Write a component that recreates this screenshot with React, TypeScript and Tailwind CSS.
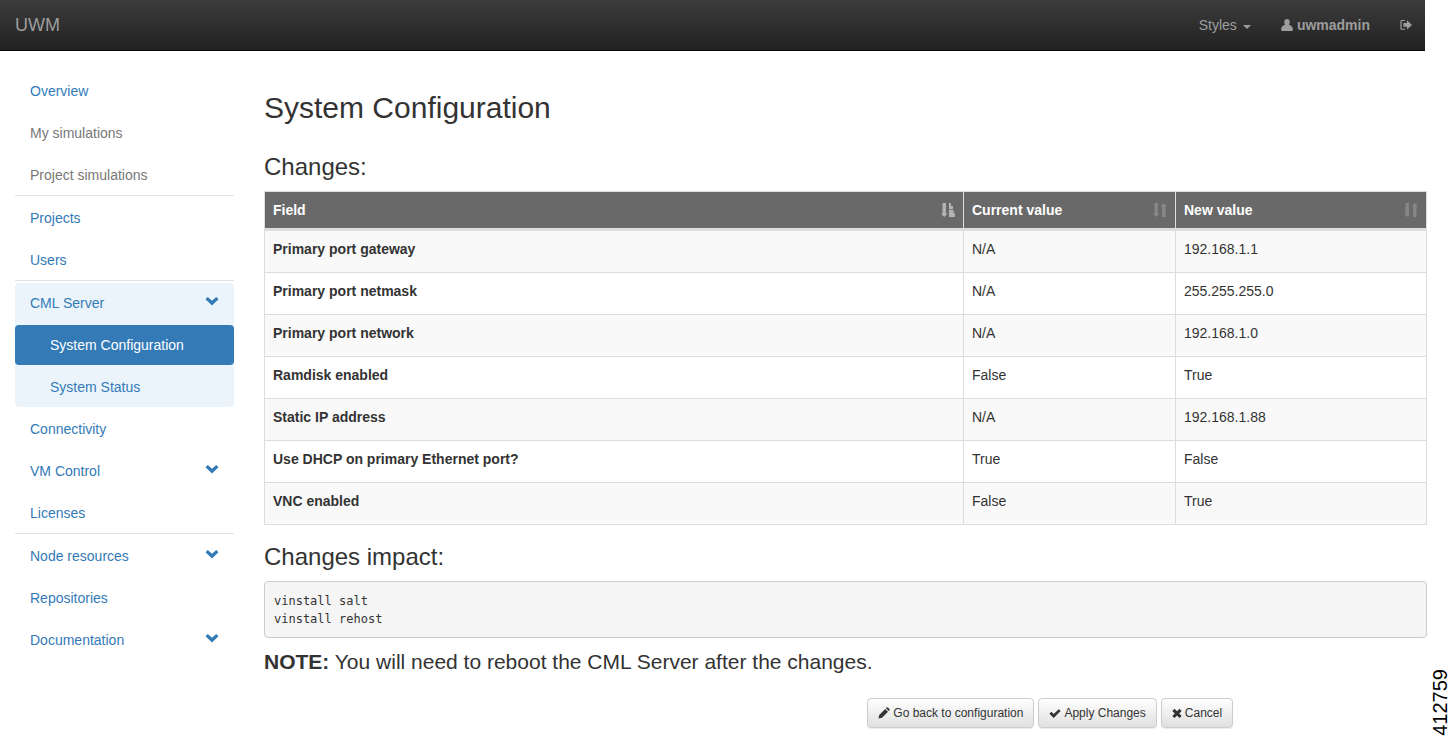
import React, { ReactNode, useState } from "react";
import clsx from "clsx";

interface NavItem {
  label: string;
  muted?: boolean;
  hasMenu?: boolean;
  divider?: boolean;
  children?: { label: string; active?: boolean }[];
}

interface Change {
  field: string;
  current: string;
  next: string;
}

const navItems: NavItem[] = [
  { label: "Overview" },
  { label: "My simulations", muted: true },
  { label: "Project simulations", muted: true, divider: true },
  { label: "Projects" },
  { label: "Users", divider: true },
  {
    label: "CML Server",
    hasMenu: true,
    children: [{ label: "System Configuration", active: true }, { label: "System Status" }],
  },
  { label: "Connectivity" },
  { label: "VM Control", hasMenu: true },
  { label: "Licenses", divider: true },
  { label: "Node resources", hasMenu: true },
  { label: "Repositories" },
  { label: "Documentation", hasMenu: true },
];

const changes: Change[] = [
  { field: "Primary port gateway", current: "N/A", next: "192.168.1.1" },
  { field: "Primary port netmask", current: "N/A", next: "255.255.255.0" },
  { field: "Primary port network", current: "N/A", next: "192.168.1.0" },
  { field: "Ramdisk enabled", current: "False", next: "True" },
  { field: "Static IP address", current: "N/A", next: "192.168.1.88" },
  { field: "Use DHCP on primary Ethernet port?", current: "True", next: "False" },
  { field: "VNC enabled", current: "False", next: "True" },
];

const columns: { key: keyof Change; label: string; width: string }[] = [
  { key: "field", label: "Field", width: "" },
  { key: "current", label: "Current value", width: "w-[212px]" },
  { key: "next", label: "New value", width: "w-[251px]" },
];

function ChevronDown() {
  return (
    <svg viewBox="0 0 14 10" className="h-[10px] w-[14px]" fill="currentColor" aria-hidden="true">
      <path d="M0.5 3.2 2.8 0.9 7 4.8 11.2 0.9 13.5 3.2 7 9.4Z" />
    </svg>
  );
}

function UserIcon() {
  return (
    <svg viewBox="0 0 12 12" className="size-3" fill="currentColor" aria-hidden="true">
      <path d="M6 0C7.9 0 8.8 1.4 8.8 3.1 8.8 4.4 8.4 5.1 8 5.7 9.6 6.4 11 7.4 11.5 8.6 11.8 9.4 11.8 10.2 11.8 11Q11.8 12 10.8 12H1.2Q0.2 12 0.2 11C0.2 10.2 0.2 9.4 0.5 8.6 1 7.4 2.4 6.4 4 5.7 3.6 5.1 3.2 4.4 3.2 3.1 3.2 1.4 4.1 0 6 0Z" />
    </svg>
  );
}

function LogoutIcon() {
  return (
    <svg viewBox="0 0 12 12" className="size-3" fill="currentColor" aria-hidden="true">
      <path d="M5 1V2H1.6V9.8H5V10.8H1.6Q0.4 10.8 0.4 9.6V2.2Q0.4 1 1.6 1Z" />
      <path d="M3.4 4H7V1.2L12 5.9 7 10.6V7.8H3.4Z" />
    </svg>
  );
}

function SortIcon({ sorted }: { sorted: boolean }) {
  return (
    <svg
      viewBox="0 0 14 14"
      className={clsx("size-[14px]", sorted ? "text-[#b4b4b4]" : "text-[#878787]")}
      fill="currentColor"
      aria-hidden="true"
    >
      <path d="M1.5 0H4.9V10.4H6.5L3.2 14 0 10.4H1.5Z" />
      {sorted ? (
        <path d="M8 0H10V3H12V6.2H8ZM8 7H12.6V10.2H14V14H8Z" />
      ) : (
        <path d="M9.1 14H12.5V3.6H14L10.8 0 7.5 3.6H9.1Z" />
      )}
    </svg>
  );
}

function PencilIcon() {
  return (
    <svg viewBox="0 0 12 12" className="size-3" fill="currentColor" aria-hidden="true">
      <path d="M0.5 11.6 1.2 8 7.2 2 10 4.8 4 10.8ZM7.9 1.3 8.6 0.6Q9.4 0 10.2 0.7L11.3 1.8Q12 2.6 11.4 3.4L10.7 4.1Z" />
    </svg>
  );
}

function CheckIcon() {
  return (
    <svg viewBox="0 0 12 12" className="size-3" fill="currentColor" aria-hidden="true">
      <path d="M0.4 6.8 2.4 4.8 4.7 7.1 9.7 2.2 11.6 4.1 4.7 10.9Z" />
    </svg>
  );
}

function RemoveIcon() {
  return (
    <svg viewBox="0 0 10 12" className="h-3 w-[10px]" fill="currentColor" aria-hidden="true">
      <path d="M0.3 3.9 2.5 1.7 5 4.2 7.5 1.7 9.7 3.9 7.2 6.4 9.7 8.9 7.5 11.1 5 8.6 2.5 11.1 0.3 8.9 2.8 6.4Z" />
    </svg>
  );
}

function ActionButton({ icon, children }: { icon: ReactNode; children: ReactNode }) {
  return (
    <button
      type="button"
      className="flex h-[30px] items-center gap-[3px] rounded border border-[#ccc] bg-linear-to-b from-white to-[#e0e0e0] px-[10px] text-xs text-[#333] shadow-[0_1px_1px_rgba(0,0,0,0.08)]"
    >
      {icon}
      {children}
    </button>
  );
}

function Sidebar() {
  return (
    <nav className="w-[219px] shrink-0">
      <ul className="flex flex-col gap-[2px]">
        {navItems.map((item) => (
          <li
            key={item.label}
            className={clsx(
              item.divider && "border-b border-[#e2e2e2]",
              item.children && "rounded bg-[#ebf4fb]"
            )}
          >
            <a
              href="#"
              className={clsx(
                "flex h-10 items-center justify-between px-[15px]",
                item.muted ? "text-[#777]" : "text-[#337ab7]"
              )}
            >
              {item.label}
              {item.hasMenu && <span className="pb-1"><ChevronDown /></span>}
            </a>
            {item.children && (
              <ul className="flex flex-col gap-[2px] pt-[2px]">
                {item.children.map((child) => (
                  <li key={child.label}>
                    <a
                      href="#"
                      className={clsx(
                        "flex h-10 items-center rounded pl-[35px]",
                        child.active ? "bg-[#337ab7] text-white" : "text-[#337ab7]"
                      )}
                    >
                      {child.label}
                    </a>
                  </li>
                ))}
              </ul>
            )}
          </li>
        ))}
      </ul>
    </nav>
  );
}

function ChangesTable() {
  const [sortKey, setSortKey] = useState<keyof Change>("field");
  const rows = [...changes].sort((a, b) => a[sortKey].localeCompare(b[sortKey]));

  return (
    <table className="w-full table-fixed border-collapse border border-[#ddd]">
      <thead>
        <tr>
          {columns.map((col) => (
            <th
              key={col.key}
              scope="col"
              aria-sort={sortKey === col.key ? "ascending" : "none"}
              className={clsx("border border-b-3 border-[#ddd] bg-[#696969] p-2 text-left text-white", col.width)}
            >
              <button
                type="button"
                className="flex w-full items-center justify-between font-bold"
                onClick={() => setSortKey(col.key)}
              >
                {col.label}
                <SortIcon sorted={sortKey === col.key} />
              </button>
            </th>
          ))}
        </tr>
      </thead>
      <tbody>
        {rows.map((row) => (
          <tr key={row.field} className="align-top odd:bg-[#f9f9f9]">
            <th scope="row" className="border border-[#ddd] px-2 pt-2 pb-[13px] text-left">{row.field}</th>
            <td className="border border-[#ddd] px-2 pt-2 pb-[13px]">{row.current}</td>
            <td className="border border-[#ddd] px-2 pt-2 pb-[13px]">{row.next}</td>
          </tr>
        ))}
      </tbody>
    </table>
  );
}

export default function App() {
  return (
    <div className="flex min-h-screen bg-white font-['Liberation_Sans',Arial,sans-serif] text-sm text-[#333]">
      <div className="min-w-0 flex-1">
        <header className="mr-[2px] flex h-[51px] items-center justify-between border-b border-[#080808] bg-linear-to-b from-[#3c3c3c] to-[#222] text-[#9d9d9d]">
          <a href="#" className="px-[15px] text-lg">UWM</a>
          <div className="flex items-center">
            <button type="button" className="flex items-center gap-[6px] px-[15px]">
              Styles
              <svg viewBox="0 0 8 4" className="mt-1 h-1 w-2" fill="currentColor" aria-hidden="true">
                <path d="M0 0H8L4 4Z" />
              </svg>
            </button>
            <a href="#" className="flex items-center gap-1 px-[15px] font-bold">
              <UserIcon />
              uwmadmin
            </a>
            <a href="#" aria-label="Log out" className="pr-[13px] pl-[15px]">
              <LogoutIcon />
            </a>
          </div>
        </header>

        <div className="flex gap-[30px] pt-5 pl-[15px]">
          <Sidebar />
          <main className="min-w-0 flex-1">
            <h1 className="mt-5 mb-[30px] text-[30px] leading-[33px]">System Configuration</h1>
            <h2 className="mb-[11px] text-2xl leading-[26px]">Changes:</h2>
            <ChangesTable />

            <h2 className="mt-[19px] mb-[11px] text-2xl leading-[26px]">Changes impact:</h2>
            <pre className="mb-[9px] rounded border border-[#ccc] bg-[#f5f5f5] px-[9px] pt-[10px] pb-[9px] font-['DejaVu_Sans_Mono',monospace] text-xs leading-[18px]">
              {"vinstall salt\nvinstall rehost"}
            </pre>
            <p className="mb-[22px] text-[21px] leading-[29px]">
              <strong>NOTE:</strong> You will need to reboot the CML Server after the changes.
            </p>

            <div className="flex w-5/6 justify-end gap-1">
              <ActionButton icon={<PencilIcon />}>Go back to configuration</ActionButton>
              <ActionButton icon={<CheckIcon />}>Apply Changes</ActionButton>
              <ActionButton icon={<RemoveIcon />}>Cancel</ActionButton>
            </div>
          </main>
        </div>
      </div>

      {/* figure number, reads bottom to top */}
      <aside className="flex w-[25px] shrink-0 items-end justify-end pb-[2px]">
        <span className="rotate-180 text-xl leading-6 text-black [writing-mode:vertical-rl]">412759</span>
      </aside>
    </div>
  );
}
